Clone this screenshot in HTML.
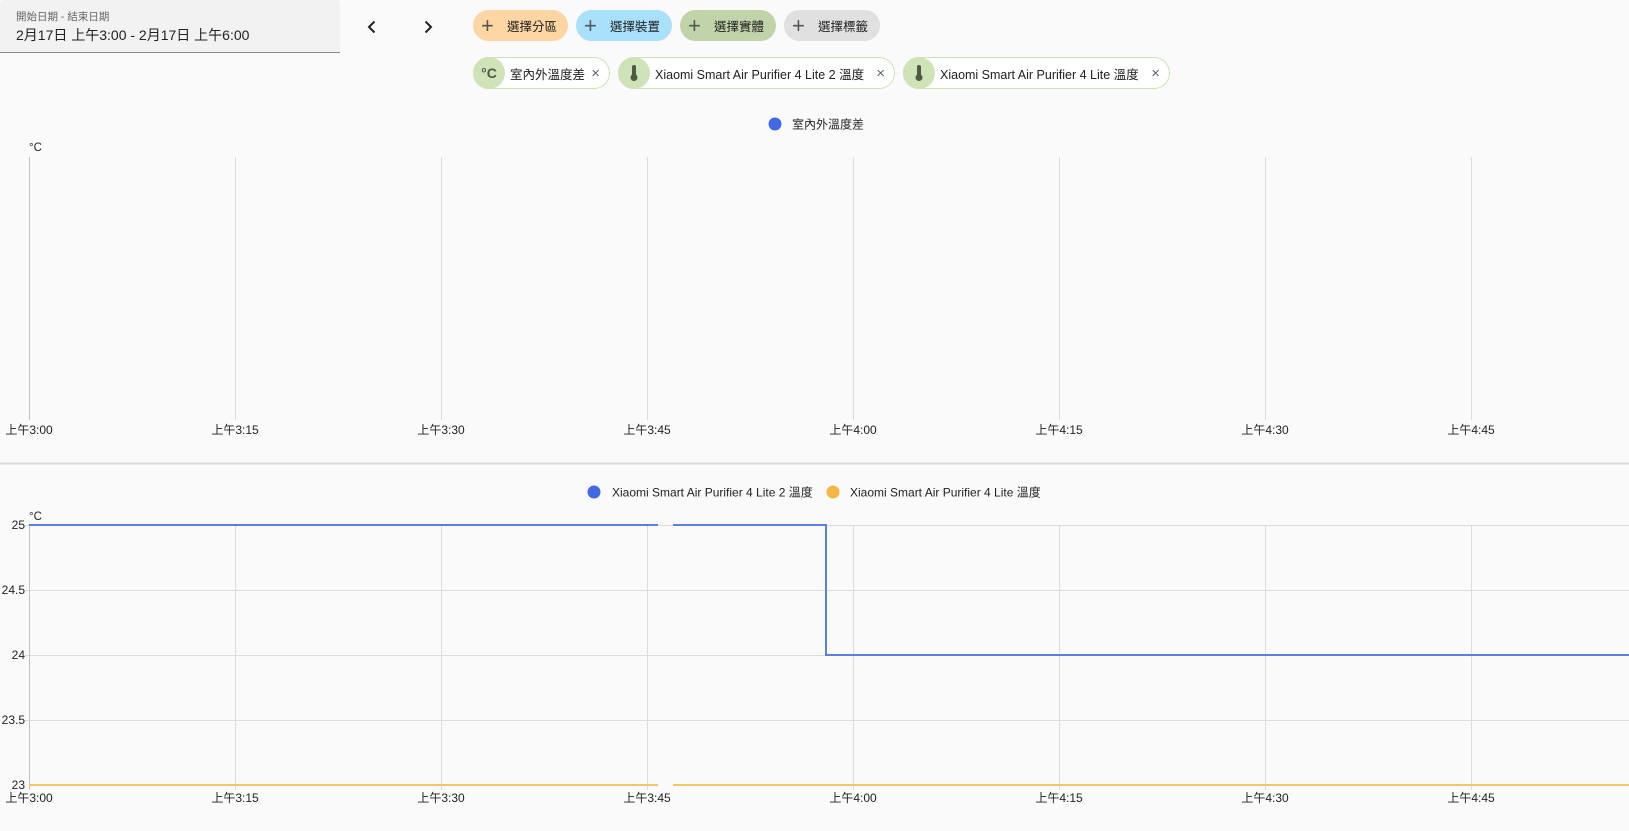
<!DOCTYPE html>
<html><head><meta charset="utf-8"><style>
*{margin:0;padding:0;box-sizing:border-box}
body{width:1629px;height:831px;background:#fafafa;font-family:"Liberation Sans","Noto Sans CJK TC",sans-serif;color:#212121;position:relative;overflow:hidden}
.abs{position:absolute}
.date{left:0;top:0;width:340px;height:53px;background:#f2f2f2;border-bottom:1px solid #8a8a8a;border-radius:4px 4px 0 0}
.chip{position:absolute;top:10px;height:31px;border-radius:16px;font-size:12.5px;display:flex;align-items:center;padding-left:8px}
.chip .p{font-size:22px;color:#555;width:24px;font-weight:300;line-height:1}
.chip .t{margin-left:2px}
.ent{position:absolute;top:57px;height:32px;border:1px solid #cfe3b8;border-radius:16px;background:#fff;font-size:12.5px;display:flex;align-items:center}
.ent .ic{width:32px;height:32px;border-radius:16px;background:#cfe3b8;margin-left:-1px;display:flex;align-items:center;justify-content:center;font-size:14px;font-weight:bold;color:#4d5a44}
.ent .t{margin-left:5px}
.ent .x{color:#666;font-size:15px;margin-left:auto;margin-right:9px}
</style></head><body>
<div class="abs date">
<div class="abs" style="left:16px;top:9px;font-size:10.5px;color:#666">開始日期 - 結束日期</div>
<div class="abs" style="left:16px;top:25px;font-size:14px">2月17日 上午3:00 - 2月17日 上午6:00</div>
</div>
<svg class="abs" style="left:364px;top:19px" width="16" height="16" viewBox="0 0 16 16"><path d="M10.5 2.5 5 8l5.5 5.5" fill="none" stroke="#222" stroke-width="2"/></svg>
<svg class="abs" style="left:420px;top:19px" width="16" height="16" viewBox="0 0 16 16"><path d="M5.5 2.5 11 8l-5.5 5.5" fill="none" stroke="#222" stroke-width="2"/></svg>
<div class="chip" style="left:473px;width:95px;background:#fdd6a3"><span class="p">+</span><span class="t">選擇分區</span></div>
<div class="chip" style="left:576px;width:96px;background:#a9e0fb"><span class="p">+</span><span class="t">選擇裝置</span></div>
<div class="chip" style="left:680px;width:96px;background:#c1d3a8"><span class="p">+</span><span class="t">選擇實體</span></div>
<div class="chip" style="left:784px;width:96px;background:#e0e0e0"><span class="p">+</span><span class="t">選擇標籤</span></div>
<div class="ent" style="left:473px;width:137px"><div class="ic">°C</div><span class="t">室內外溫度差</span><span class="x">×</span></div>
<div class="ent" style="left:618px;width:277px"><div class="ic"><svg width="10" height="18" viewBox="0 0 10 18"><rect x="3" y="1" width="4" height="11" rx="2" fill="#4d5a44"/><circle cx="5" cy="13.5" r="3.5" fill="#4d5a44"/></svg></div><span class="t">Xiaomi Smart Air Purifier 4 Lite 2 溫度</span><span class="x">×</span></div>
<div class="ent" style="left:903px;width:267px"><div class="ic"><svg width="10" height="18" viewBox="0 0 10 18"><rect x="3" y="1" width="4" height="11" rx="2" fill="#4d5a44"/><circle cx="5" cy="13.5" r="3.5" fill="#4d5a44"/></svg></div><span class="t">Xiaomi Smart Air Purifier 4 Lite 溫度</span><span class="x">×</span></div>

<svg class="abs" style="left:0;top:0" width="1629" height="831" font-family="Liberation Sans, Noto Sans CJK TC, sans-serif" font-size="12" fill="#222">
<circle cx="775" cy="124" r="6.5" fill="#4169e1"/><text x="792" y="128.5">室內外溫度差</text>
<text x="29" y="151" font-size="11.5">°C</text>
<g stroke="#dcdcdc" stroke-width="1">
<line x1="235.5" y1="157" x2="235.5" y2="420"/><line x1="441.5" y1="157" x2="441.5" y2="420"/><line x1="647.5" y1="157" x2="647.5" y2="420"/><line x1="853.5" y1="157" x2="853.5" y2="420"/><line x1="1059.5" y1="157" x2="1059.5" y2="420"/><line x1="1265.5" y1="157" x2="1265.5" y2="420"/><line x1="1471.5" y1="157" x2="1471.5" y2="420"/>
</g>
<line x1="29.5" y1="157" x2="29.5" y2="420" stroke="#c2c2c2"/>
<g text-anchor="middle">
<text x="29" y="434">上午3:00</text><text x="235" y="434">上午3:15</text><text x="441" y="434">上午3:30</text><text x="647" y="434">上午3:45</text><text x="853" y="434">上午4:00</text><text x="1059" y="434">上午4:15</text><text x="1265" y="434">上午4:30</text><text x="1471" y="434">上午4:45</text>
</g>
<line x1="0" y1="463.5" x2="1629" y2="463.5" stroke="#dadada" stroke-width="2"/>
<circle cx="594" cy="492" r="6.5" fill="#4169e1"/><text x="612" y="496.5">Xiaomi Smart Air Purifier 4 Lite 2 溫度</text>
<circle cx="833" cy="492" r="6.5" fill="#f3b843"/><text x="850" y="496.5">Xiaomi Smart Air Purifier 4 Lite 溫度</text>
<text x="29" y="520" font-size="11.5">°C</text>
<g stroke="#dcdcdc" stroke-width="1">
<line x1="24" y1="525.5" x2="1629" y2="525.5"/><line x1="24" y1="590.5" x2="1629" y2="590.5"/><line x1="24" y1="655.5" x2="1629" y2="655.5"/><line x1="24" y1="720.5" x2="1629" y2="720.5"/>
<line x1="235.5" y1="525" x2="235.5" y2="790"/><line x1="441.5" y1="525" x2="441.5" y2="790"/><line x1="647.5" y1="525" x2="647.5" y2="790"/><line x1="853.5" y1="525" x2="853.5" y2="790"/><line x1="1059.5" y1="525" x2="1059.5" y2="790"/><line x1="1265.5" y1="525" x2="1265.5" y2="790"/><line x1="1471.5" y1="525" x2="1471.5" y2="790"/>
</g>
<line x1="29.5" y1="525" x2="29.5" y2="790" stroke="#c2c2c2"/>
<g text-anchor="end"><text x="25" y="529">25</text><text x="25" y="594">24.5</text><text x="25" y="659">24</text><text x="25" y="724">23.5</text><text x="25" y="789">23</text></g>
<g fill="none" stroke-width="2">
<path d="M29 525H658M673 525H826V655H1629" stroke="#5b7fdf"/>
<path d="M29 785H658M673 785H1629" stroke="#f3c66a"/>
</g>
<g text-anchor="middle">
<text x="29" y="802">上午3:00</text><text x="235" y="802">上午3:15</text><text x="441" y="802">上午3:30</text><text x="647" y="802">上午3:45</text><text x="853" y="802">上午4:00</text><text x="1059" y="802">上午4:15</text><text x="1265" y="802">上午4:30</text><text x="1471" y="802">上午4:45</text>
</g>
</svg>
</body></html>
